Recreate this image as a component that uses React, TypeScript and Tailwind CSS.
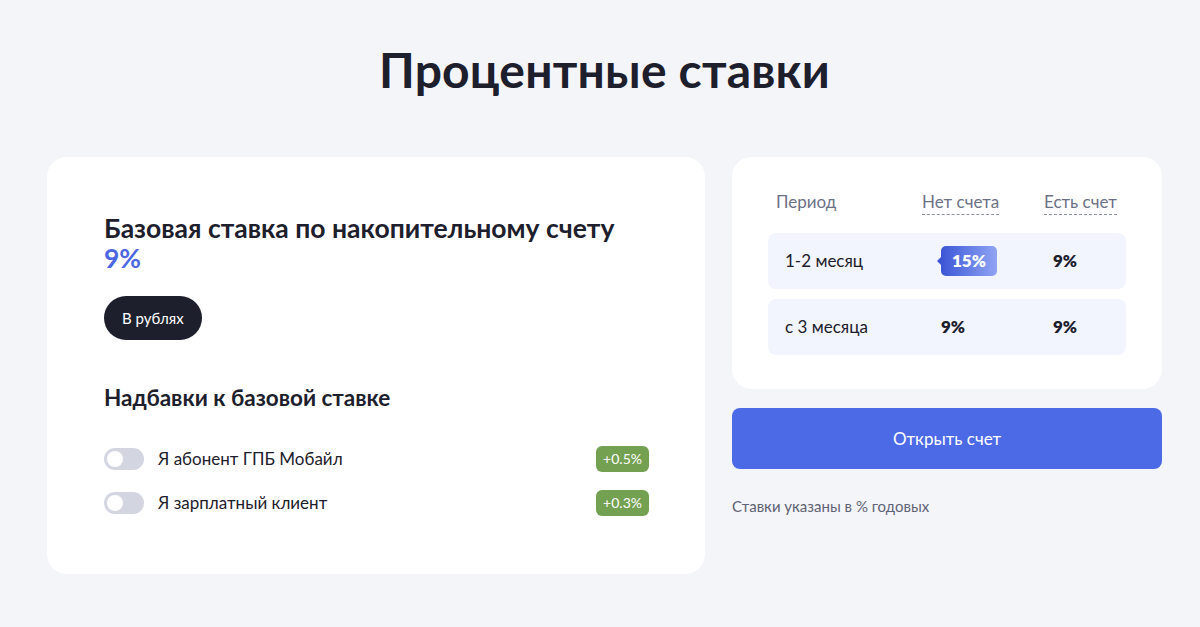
import React from "react";

const FONT = "font-['Lato','Noto_Sans',sans-serif]";

function Toggle() {
  return (
    <span className="flex h-[22px] w-[40px] shrink-0 items-center rounded-full bg-[#d3d5e1] pl-[3px]">
      <span className="h-[16px] w-[16px] rounded-full bg-white" />
    </span>
  );
}

function Bonus({ label, value }: { label: string; value: string }) {
  return (
    <div className="flex items-center">
      <Toggle />
      <span className="ml-[14px] flex-1 text-[17px] text-[#1d202c]">{label}</span>
      <span className="rounded-[6px] bg-[#74a052] px-[7px] py-[4px] text-[14px] leading-[18px] text-white">{value}</span>
    </div>
  );
}

const ROWS = [
  { period: "1-2 месяц", none: "15%", has: "9%", promo: true },
  { period: "с 3 месяца", none: "9%", has: "9%", promo: false },
];

export default function App() {
  return (
    <div className={`${FONT} min-h-[627px] bg-[#f4f5f9] text-[#1d202c]`}>
      <div className="w-[1209px]">
        <h1 className="pt-[40px] text-center text-[48px] font-bold leading-[60px] tracking-[0.2px]">Процентные ставки</h1>
      </div>

      <div className="mt-[57px] flex gap-[27px] pl-[47px]">
        <div className="h-[417px] w-[658px] shrink-0 rounded-[20px] bg-white px-[57px] pt-[56px]">
          <h2 className="text-[26.5px] font-bold leading-[30px]">
            Базовая ставка по накопительному счету
            <br />
            <span className="text-[#4b67e1]">9%</span>
          </h2>
          <button className="mt-[23px] h-[44px] rounded-full bg-[#1d202c] px-[18px] text-[15px] text-white">В рублях</button>
          <h3 className="mt-[44px] text-[22.5px] font-bold leading-[28px]">Надбавки к базовой ставке</h3>
          <div className="mt-[34px] flex w-[545px] flex-col gap-[18px]">
            <Bonus label="Я абонент ГПБ Мобайл" value="+0.5%" />
            <Bonus label="Я зарплатный клиент" value="+0.3%" />
          </div>
        </div>

        <div className="flex w-[430px] shrink-0 flex-col">
          <div className="h-[232px] rounded-[20px] bg-white px-[36px] pt-[33px]">
            <div className="grid grid-cols-[146px_122px_1fr] pl-[8px] text-[17px] leading-[24px] text-[#6c7186]">
              <span>Период</span>
              <span className="w-fit border-b border-dashed border-[#8a8fa3]">Нет счета</span>
              <span className="w-fit border-b border-dashed border-[#8a8fa3]">Есть счет</span>
            </div>
            <div className="mt-[18px] flex flex-col gap-[10px]">
              {ROWS.map((r) => (
                <div key={r.period} className="grid h-[56px] grid-cols-[156px_112px_1fr] items-center rounded-[8px] bg-[#f2f5fd] pl-[17px] text-[17px]">
                  <span>{r.period}</span>
                  {r.promo ? (
                    <span className="relative w-fit rounded-[5px] bg-gradient-to-r from-[#3d55d6] to-[#91a3f3] px-[11px] py-[4px] text-[17px] font-extrabold leading-[22px] text-white">
                      <span className="absolute left-[-4px] top-[11px] h-0 w-0 border-y-[4px] border-r-[4px] border-y-transparent border-r-[#3d55d6]" />
                      {r.none}
                    </span>
                  ) : (
                    <span className="font-extrabold">{r.none}</span>
                  )}
                  <span className="font-extrabold">{r.has}</span>
                </div>
              ))}
            </div>
          </div>
          <button className="mt-[19px] h-[61px] rounded-[8px] bg-[#4d6ae6] text-[17px] text-white">Открыть счет</button>
          <p className="mt-[26px] text-[15px] text-[#5e6274]">Ставки указаны в % годовых</p>
        </div>
      </div>
    </div>
  );
}
